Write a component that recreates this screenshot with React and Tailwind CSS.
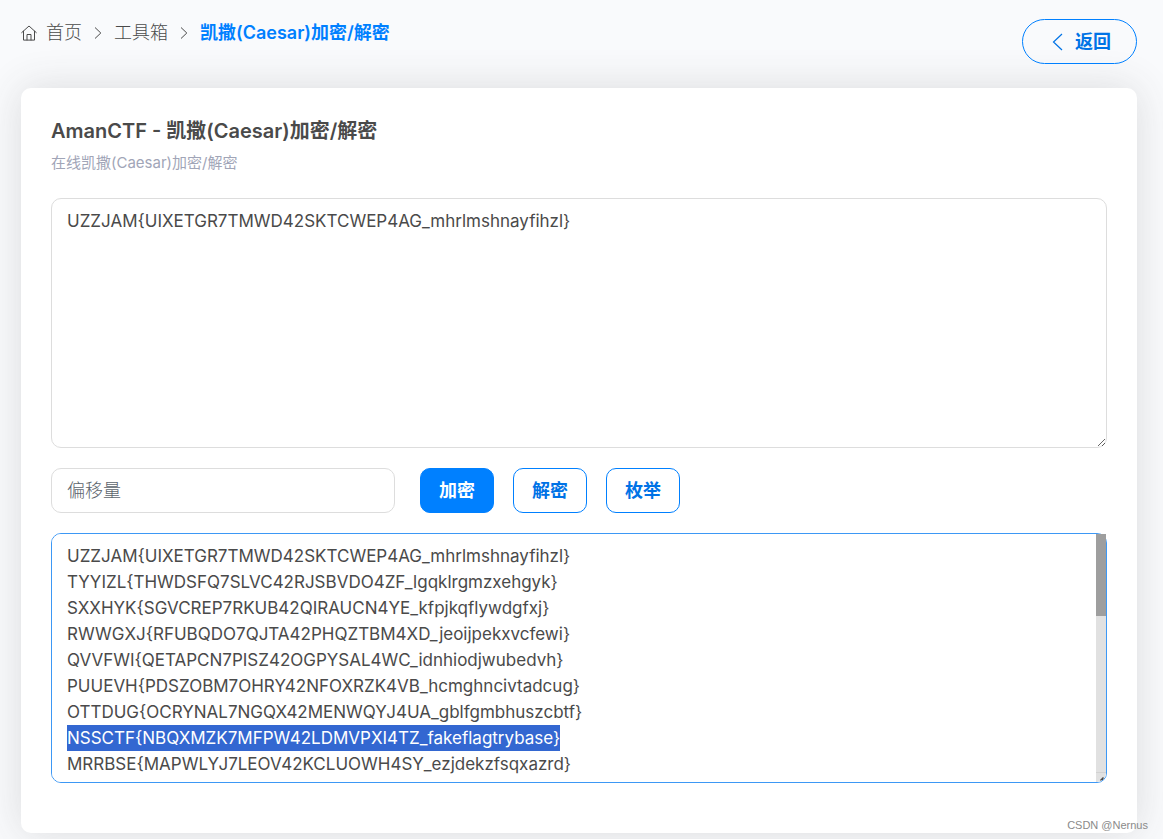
import React, { useEffect, useRef, useState } from 'react';

const shiftChar = (char, base, offset) =>
  String.fromCharCode(((char.charCodeAt(0) - base + offset + 26) % 26) + base);

const caesar = (text, offset) =>
  text
    .replace(/[A-Z]/g, (c) => shiftChar(c, 65, offset))
    .replace(/[a-z]/g, (c) => shiftChar(c, 97, offset));

const enumerate = (text) => {
  let lines = '';
  for (let i = 0; i < 26; i++) {
    lines += caesar(text, -i) + '\n';
  }
  return lines;
};

const SAMPLE = 'UZZJAM{UIXETGR7TMWD42SKTCWEP4AG_mhrlmshnayfihzl}';

const HomeIcon = () => (
  <svg className="h-4 w-4 shrink-0" viewBox="0 0 16 16" fill="none" stroke="currentColor" strokeWidth="1" strokeLinejoin="round" strokeLinecap="round" aria-hidden="true">
    <path d="M0.7 7.6L8 1l7.3 6.6M2.5 6.2v8.9h11V6.2M6 15V9.5h4V15" />
  </svg>
);

const Separator = () => (
  <li aria-hidden="true" className="px-3">
    <svg className="h-3 w-2" viewBox="0 0 8 12" fill="none" stroke="currentColor" strokeWidth="1">
      <path d="M1 0.5L6.8 6L1 11.5" />
    </svg>
  </li>
);

const TextBox = ({ className = '', ...props }) => (
  <textarea
    spellCheck={false}
    className={`block h-[250px] w-full rounded-[10px] border bg-white px-[15px] pt-[9px] pb-2 text-[17px] leading-[26px] outline-none selection:bg-[#3367d1] selection:text-white ${className}`}
    {...props}
  />
);

const ToolButton = ({ primary = false, children, ...props }) => (
  <button
    type="button"
    className={`h-[45px] cursor-pointer rounded-[10px] border border-[#0080ff] px-[18px] text-[18px] font-bold ${
      primary ? 'bg-[#0080ff] text-white' : 'bg-white text-[#0073e6]'
    }`}
    {...props}
  >
    {children}
  </button>
);

export default function App() {
  const [source, setSource] = useState(SAMPLE);
  const [offset, setOffset] = useState('');
  const [result, setResult] = useState(enumerate(SAMPLE));
  const [thumb, setThumb] = useState({ top: 0, height: 34 });
  const resultRef = useRef(null);

  const updateThumb = () => {
    const { scrollTop, scrollHeight, clientHeight } = resultRef.current;
    setThumb({
      top: (scrollTop / scrollHeight) * 100,
      height: (clientHeight / scrollHeight) * 100
    });
  };

  // highlight the line that holds the readable flag
  useEffect(() => {
    const box = resultRef.current;
    const start = box.value.indexOf('NSSCTF{');
    if (start < 0) return;
    box.focus({ preventScroll: true });
    box.setSelectionRange(start, box.value.indexOf('\n', start));
    box.scrollTop = 0;
  }, []);

  useEffect(updateThumb, [result]);

  const shift = (Number(offset) || 0) % 26;

  return (
    <div className="relative min-h-screen overflow-hidden bg-[#f9fafc] pt-[19px] pr-[26px] pb-[6px] pl-[21px] font-['Inter','Noto_Sans_CJK_SC',sans-serif] text-[#4a4a4a]">
      <header className="flex items-start justify-between">
        <nav aria-label="breadcrumb">
          <ol className="flex items-center text-[18px] leading-[28px] font-light">
            <li>
              <a href="#" className="flex items-center gap-[9px]">
                <HomeIcon />
                首页
              </a>
            </li>
            <Separator />
            <li>
              <a href="#">工具箱</a>
            </li>
            <Separator />
            <li aria-current="page" className="font-semibold text-[#0080ff]">
              凯撒(Caesar)加密/解密
            </li>
          </ol>
        </nav>
        <button type="button" className="flex h-[45px] cursor-pointer items-center gap-3 rounded-full border border-[#0080ff] pr-[25px] pl-[29px] text-[18px] font-bold text-[#0073e6]">
          <svg className="h-[18px] w-[11px]" viewBox="0 0 11 18" fill="none" stroke="currentColor" strokeWidth="1.2" aria-hidden="true">
            <path d="M10 1L1.5 9L10 17" />
          </svg>
          返回
        </button>
      </header>

      <main className="mt-6 rounded-[10px] bg-white px-[30px] pt-[30px] pb-[50px] shadow-[0_0_40px_rgba(60,60,60,0.16)]">
        <h1 className="text-[20px] leading-[26px] font-semibold">AmanCTF - 凯撒(Caesar)加密/解密</h1>
        <p className="mt-[7px] text-[15px] leading-[24px] text-[#a1a5b7]">在线凯撒(Caesar)加密/解密</p>

        <TextBox
          className="mt-[23px] border-[#dddddd]"
          aria-label="原文"
          value={source}
          onChange={(e) => setSource(e.target.value)}
        />

        <div className="my-5 flex items-center">
          <div className="w-1/3 pr-2">
            <input
              type="text"
              placeholder="偏移量"
              aria-label="偏移量"
              value={offset}
              onChange={(e) => setOffset(e.target.value)}
              className="h-[45px] w-full rounded-[10px] border border-[#dddddd] px-[15px] text-[18px] font-light outline-none placeholder:text-[#5c656d]"
            />
          </div>
          <div className="ml-[17px] flex gap-[19px]">
            <ToolButton primary onClick={() => setResult(caesar(source, shift))}>加密</ToolButton>
            <ToolButton onClick={() => setResult(caesar(source, -shift))}>解密</ToolButton>
            <ToolButton onClick={() => setResult(enumerate(source))}>枚举</ToolButton>
          </div>
        </div>

        <div className="relative">
          <TextBox
            ref={resultRef}
            className="resize-none border-[#3d98f5] [scrollbar-width:none]"
            aria-label="结果"
            value={result}
            onChange={(e) => setResult(e.target.value)}
            onScroll={updateThumb}
          />
          <div className="pointer-events-none absolute top-px right-px bottom-px flex w-[10px] flex-col overflow-hidden rounded-br-[9px] bg-[#e1e1e1]" aria-hidden="true">
            <div className="relative flex-1">
              <div
                className="absolute w-full bg-[#9e9e9e]"
                style={{ top: `${thumb.top}%`, height: `${thumb.height}%` }}
              />
            </div>
            <svg className="h-[10px] w-[10px]" viewBox="0 0 10 10" fill="none" stroke="#4a4a4a">
              <path d="M0 0.5H10" stroke="#d2d2d2" />
              <path d="M4.5 8.5L7.5 5.5M6.5 8.5L8 7" strokeWidth="1.5" />
            </svg>
          </div>
        </div>
      </main>

      <span className="absolute right-[15px] bottom-[6px] font-['Liberation_Sans',sans-serif] text-[11px] leading-4 text-[#8a8a8a]">CSDN @Nernus</span>
    </div>
  );
}
